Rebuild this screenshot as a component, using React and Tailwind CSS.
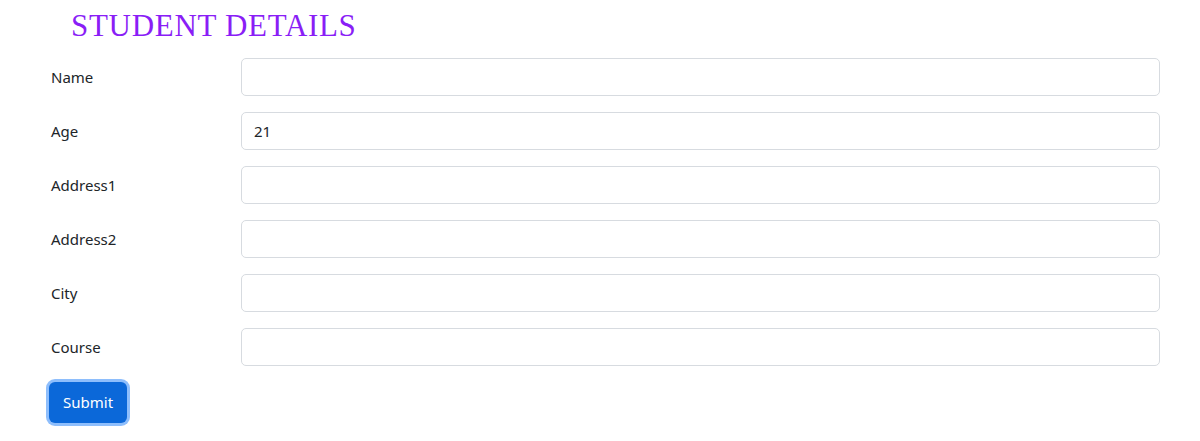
import React from 'react'

const fields = [
  { label: 'Name', value: '' },
  { label: 'Age', value: '21' },
  { label: 'Address1', value: '' },
  { label: 'Address2', value: '' },
  { label: 'City', value: '' },
  { label: 'Course', value: '' },
]

export default function App() {
  return (
    <div className="min-h-[441px] bg-white pl-[51px] pr-[40px] pt-[8px] font-['Noto_Sans','Open_Sans',sans-serif] text-[#212529]">
      <h1 className="pl-[20px] font-['Liberation_Serif',serif] text-[31px] leading-[36px] tracking-[0.7px] text-[#8a1ef6]">
        STUDENT DETAILS
      </h1>
      <form className="mt-[14px] flex flex-col gap-[16px]" onSubmit={(e) => e.preventDefault()}>
        {fields.map((f) => (
          <div key={f.label} className="flex items-center">
            <label className="w-[190px] shrink-0 text-[15px]">{f.label}</label>
            <input
              defaultValue={f.value}
              className="h-[38px] flex-1 rounded-[5px] border border-[#d7dbe0] px-[12px] text-[15px] text-[#212529] outline-none"
            />
          </div>
        ))}
      </form>
      <div className="mt-[16px] -ml-[2px]">
        <button className="rounded-[6px] bg-[#0b68d9] px-[14px] py-[8px] text-[15px] leading-[25px] text-white ring-[3px] ring-[#8ebefc]">
          Submit
        </button>
      </div>
    </div>
  )
}
